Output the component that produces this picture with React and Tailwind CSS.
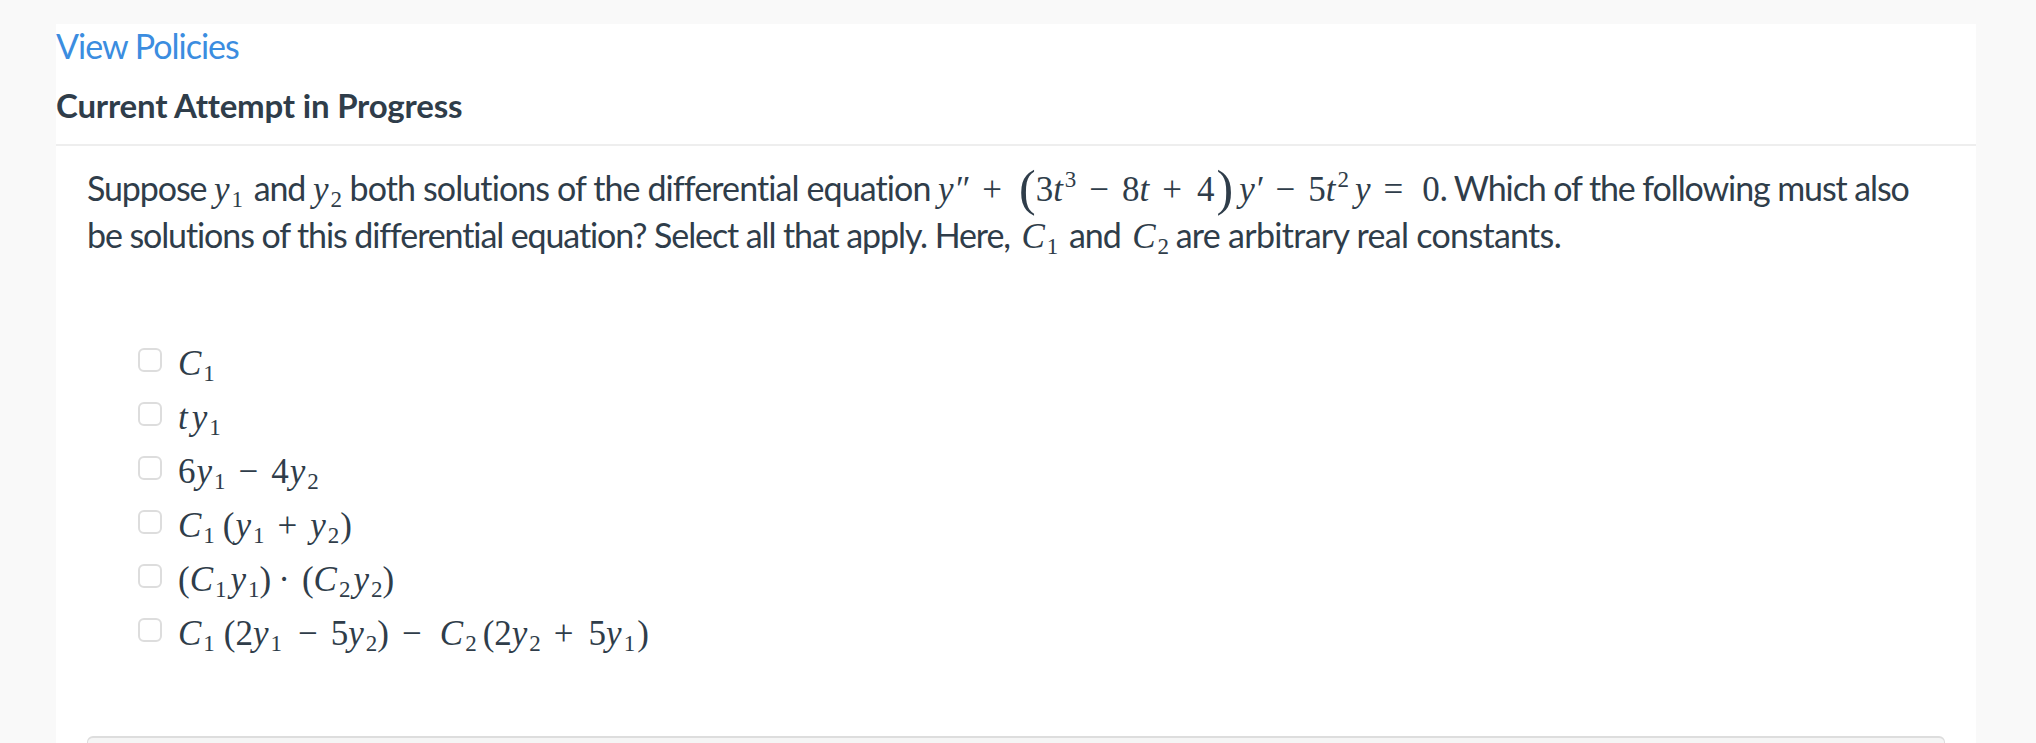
const Mi = ({ children, className = "" }) => (
  <i className={`font-['Liberation_Serif',serif] tracking-normal italic font-normal text-[35px] leading-[0] ${className}`}>{children}</i>
);
const Mn = ({ children, className = "" }) => (
  <span className={`font-['Liberation_Serif',serif] tracking-normal font-normal text-[35px] leading-[0] ${className}`}>{children}</span>
);
const Sub = ({ children }) => (
  <span className="ml-[2px] font-['Liberation_Serif',serif] tracking-normal text-[23px] leading-[0] align-[-6px] font-normal">{children}</span>
);
const Sup = ({ children }) => (
  <span className="ml-[2px] font-['Liberation_Serif',serif] tracking-normal text-[23px] leading-[0] align-[14px] font-normal">{children}</span>
);
const Op = ({ children, className = "mx-[13px]" }) => (
  <span className={`font-['Liberation_Serif',serif] tracking-normal font-normal text-[35px] leading-[0] ${className}`}>{children}</span>
);
const BigParen = ({ children, className = "" }) => (
  <span className={`font-['Liberation_Serif',serif] tracking-normal text-[50px] leading-[0] font-normal align-[-4px] ${className}`}>{children}</span>
);

const options = [
  <>
    <Mi>C</Mi>
    <Sub>1</Sub>
  </>,
  <>
    <Mi>t</Mi>
    <Mi className="ml-[4px]">y</Mi>
    <Sub>1</Sub>
  </>,
  <>
    <Mn>6</Mn>
    <Mi className="ml-[1px]">y</Mi>
    <Sub>1</Sub>
    <Op>−</Op>
    <Mn>4</Mn>
    <Mi className="ml-[1px]">y</Mi>
    <Sub>2</Sub>
  </>,
  <>
    <Mi>C</Mi>
    <Sub>1</Sub>
    <Mn className="ml-[8px]">(</Mn>
    <Mi className="ml-[1px]">y</Mi>
    <Sub>1</Sub>
    <Op>+</Op>
    <Mi>y</Mi>
    <Sub>2</Sub>
    <Mn className="ml-[1px]">)</Mn>
  </>,
  <>
    <Mn>(</Mn>
    <Mi>C</Mi>
    <Sub>1</Sub>
    <Mi className="ml-[4px]">y</Mi>
    <Sub>1</Sub>
    <Mn>)</Mn>
    <Mn className="ml-[7px] mr-[12px]">·</Mn>
    <Mn>(</Mn>
    <Mi>C</Mi>
    <Sub>2</Sub>
    <Mi className="ml-[3px]">y</Mi>
    <Sub>2</Sub>
    <Mn>)</Mn>
  </>,
  <>
    <Mi>C</Mi>
    <Sub>1</Sub>
    <Mn className="ml-[9px]">(2</Mn>
    <Mi>y</Mi>
    <Sub>1</Sub>
    <Op className="ml-[16px] mr-[13px]">−</Op>
    <Mn>5</Mn>
    <Mi>y</Mi>
    <Sub>2</Sub>
    <Mn>)</Mn>
    <Op className="ml-[13px] mr-[18px]">−</Op>
    <Mi>C</Mi>
    <Sub>2</Sub>
    <Mn className="ml-[6px]">(2</Mn>
    <Mi>y</Mi>
    <Sub>2</Sub>
    <Op className="ml-[13px] mr-[15px]">+</Op>
    <Mn>5</Mn>
    <Mi>y</Mi>
    <Sub>1</Sub>
    <Mn className="ml-[2px]">)</Mn>
  </>,
];

export default function App() {
  return (
    <div className="h-[743px] overflow-hidden bg-[#f9f9f9] pt-[24px] pl-[56px] pr-[60px] font-['Lato',sans-serif] text-[#2f3d4a]">
      <div className="h-[719px] bg-white">
        {/* header */}
        <div className="h-[122px] border-b-2 border-[#eeeeee] pt-[1px]">
          <a className="block text-[34px] leading-[42px] tracking-[-1px] text-[#3b8de0]">View Policies</a>
          <h2 className="mt-[18px] text-[33px] leading-[40px] font-bold tracking-[-0.2px]">Current Attempt in Progress</h2>
        </div>

        {/* question */}
        <div className="pl-[31px] pt-[18px] text-[34px] leading-[47px] tracking-[-1.1px]">
          <p className="whitespace-nowrap">
            Suppose{" "}
            <Mi>y</Mi>
            <Sub>1</Sub>{" "}
            <span className="ml-[3px]">and</span>{" "}
            <Mi>y</Mi>
            <Sub>2</Sub>{" "}
            <span className="tracking-[-0.9px]">both solutions of the differential equation</span> <Mi>y</Mi>
            <Mi>″</Mi>
            <Op className="ml-[14px] mr-[17px]">+</Op>
            <BigParen>(</BigParen>
            <Mn>3</Mn>
            <Mi>t</Mi>
            <Sup>3</Sup>
            <Op>−</Op>
            <Mn>8</Mn>
            <Mi>t</Mi>
            <Op className="ml-[13px] mr-[15px]">+</Op>
            <Mn>4</Mn>
            <BigParen className="ml-[2px] mr-[6px]">)</BigParen>
            <Mi>y</Mi>
            <Mi>′</Mi>
            <Op>−</Op>
            <Mn>5</Mn>
            <Mi>t</Mi>
            <Sup>2</Sup>
            <Mi className="ml-[6px]">y</Mi>
            <Op>=</Op>
            <Mn className="ml-[6px]">0</Mn>. Which of the following must also
          </p>
          <p className="whitespace-nowrap">
            be solutions of this differential equation? Select all that apply. Here,{" "}
            <span className="ml-[4px] mr-[3px]">
              <Mi>C</Mi>
              <Sub>1</Sub>
            </span>{" "}
            and{" "}
            <span className="ml-[4px] -mr-[1px]">
              <Mi>C</Mi>
              <Sub>2</Sub>
            </span>{" "}
            <span className="tracking-[-0.7px]">are arbitrary real constants.</span>
          </p>
        </div>

        {/* options */}
        <ul className="mt-[77px] pl-[82px]">
          {options.map((opt, i) => (
            <li key={i} className="flex h-[54px] items-start">
              <span className="mt-[13px] block h-[24px] w-[24px] rounded-[6px] border-2 border-[#dddddd] bg-white" />
              <span className="ml-[16px] mt-[5px] whitespace-nowrap text-[35px] leading-[42px]">{opt}</span>
            </li>
          ))}
        </ul>

        {/* answer box */}
        <div className="mx-[31px] mt-[77px] h-[40px] rounded-t-[6px] border border-t-2 border-[#dddddd] bg-[#f5f5f5]" />
      </div>
    </div>
  );
}
